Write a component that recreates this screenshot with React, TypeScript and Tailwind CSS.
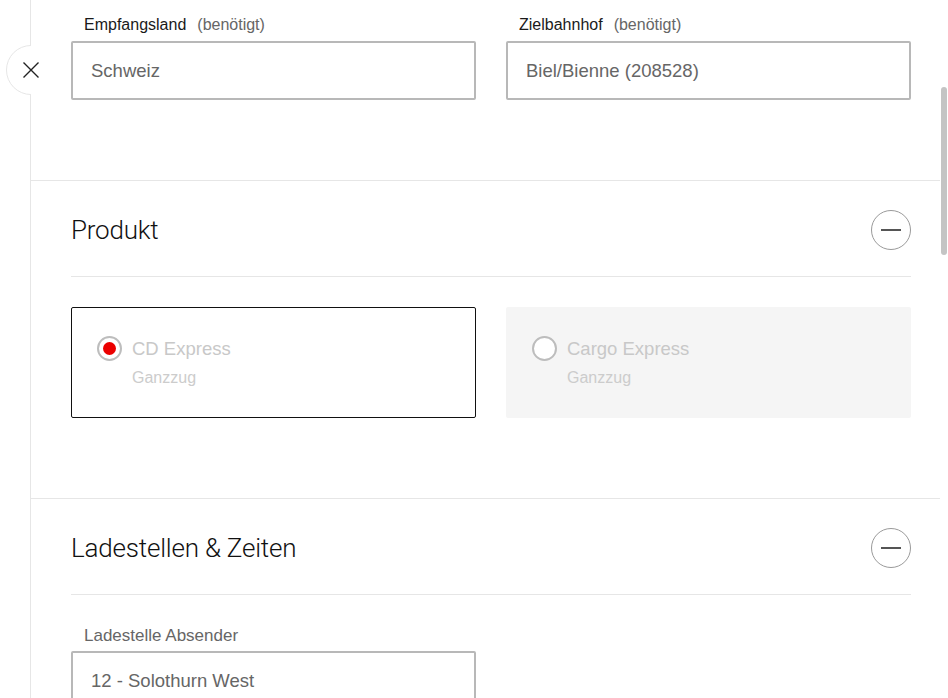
import React from "react";

function MinusButton() {
  return (
    <button className="w-[40px] h-[40px] rounded-full border border-[#9a9a9a] bg-white flex items-center justify-center shrink-0">
      <span className="block w-[20px] h-[1.5px] bg-[#555]" />
    </button>
  );
}

function Radio({ checked }: { checked: boolean }) {
  return (
    <span className="w-[25px] h-[25px] rounded-full border-2 border-[#bdbdbd] bg-white flex items-center justify-center shrink-0">
      {checked && <span className="block w-[13px] h-[13px] rounded-full bg-[#eb0000]" />}
    </span>
  );
}

function Field({ label, required, value }: { label: string; required?: boolean; value: string }) {
  return (
    <div className="flex flex-col">
      <div className="pl-[13px] h-[19px] leading-[19px] mb-[7px] whitespace-nowrap">
        {required ? (
          <>
            <span className="text-[16px] text-[#1a1a1a]">{label}</span>
            <span className="text-[16px] text-[#666] ml-[11px]">(benötigt)</span>
          </>
        ) : (
          <span className="text-[17px] text-[#666]">{label}</span>
        )}
      </div>
      <div className="h-[59px] border-2 border-[#b8b8b8] rounded-[2px] flex items-center pl-[18px] text-[18.5px] text-[#666]">
        {value}
      </div>
    </div>
  );
}

function SectionHeader({ title }: { title: string }) {
  return (
    <div className="flex items-center justify-between h-[40px] mb-[26px]">
      <h2 className="font-['Roboto'] font-light text-[26px] tracking-[-0.2px] text-[#111] leading-none">{title}</h2>
      <MinusButton />
    </div>
  );
}

export default function App() {
  return (
    <div className="relative w-[948px] h-[698px] overflow-hidden bg-white font-['Liberation_Sans',Arial,sans-serif]">
      <div className="ml-[30px] h-full border-l border-[#e6e6e6] pr-[8px]">
        {/* Section: Empfang */}
        <section className="border-b border-[#e6e6e6] pt-[15px] pb-[80px] pl-[40px] pr-[29px]">
          <div className="grid grid-cols-2 gap-[30px]">
            <Field label="Empfangsland" required value="Schweiz" />
            <Field label="Zielbahnhof" required value="Biel/Bienne (208528)" />
          </div>
        </section>

        {/* Section: Produkt */}
        <section className="border-b border-[#e6e6e6] pt-[29px] pb-[80px] pl-[40px] pr-[29px]">
          <SectionHeader title="Produkt" />
          <div className="border-t border-[#e6e6e6] pt-[30px]">
            <div className="grid grid-cols-2 gap-[30px]">
              <div className="h-[111px] border border-[#111] rounded-[2px] flex items-start pl-[25px] pt-[28px] gap-[10px]">
                <Radio checked />
                <div className="flex flex-col">
                  <span className="text-[18.5px] leading-[25px] text-[#c8c8c8]">CD Express</span>
                  <span className="text-[16px] leading-[19px] mt-[7px] text-[#cccccc]">Ganzzug</span>
                </div>
              </div>
              <div className="h-[111px] bg-[#f5f5f5] rounded-[2px] flex items-start pl-[26px] pt-[29px] gap-[10px]">
                <Radio checked={false} />
                <div className="flex flex-col">
                  <span className="text-[18.5px] leading-[25px] text-[#c8c8c8]">Cargo Express</span>
                  <span className="text-[16px] leading-[19px] mt-[7px] text-[#cccccc]">Ganzzug</span>
                </div>
              </div>
            </div>
          </div>
        </section>

        {/* Section: Ladestellen */}
        <section className="pt-[29px] pl-[40px] pr-[29px]">
          <SectionHeader title="Ladestellen & Zeiten" />
          <div className="border-t border-[#e6e6e6] pt-[31px]">
            <div className="grid grid-cols-2 gap-[30px]">
              <div className="flex flex-col">
                <div className="pl-[13px] h-[19px] leading-[19px] mb-[6px] whitespace-nowrap">
                  <span className="text-[17px] text-[#666]">Ladestelle Absender</span>
                </div>
                <div className="h-[59px] border-2 border-[#b8b8b8] rounded-[2px] flex items-center pl-[18px] text-[18.5px] text-[#666]">
                  12 - Solothurn West
                </div>
              </div>
            </div>
          </div>
        </section>
      </div>

      {/* Close button (overlay) */}
      <button className="absolute left-[6px] top-[45px] w-[50px] h-[50px] rounded-full bg-white">
        <svg width="50" height="50" viewBox="0 0 50 50" className="absolute inset-0">
          <path d="M25 0.5 A24.5 24.5 0 0 0 25 49.5" fill="none" stroke="#e6e6e6" strokeWidth="1" />
          <path d="M17.5 17.5 L32.5 32.5 M32.5 17.5 L17.5 32.5" stroke="#222" strokeWidth="1.4" />
        </svg>
      </button>

      {/* Scrollbar */}
      <div className="absolute right-[1px] top-[87px] w-[6px] h-[168px] rounded-full bg-[#c4c4c4]" />
    </div>
  );
}
